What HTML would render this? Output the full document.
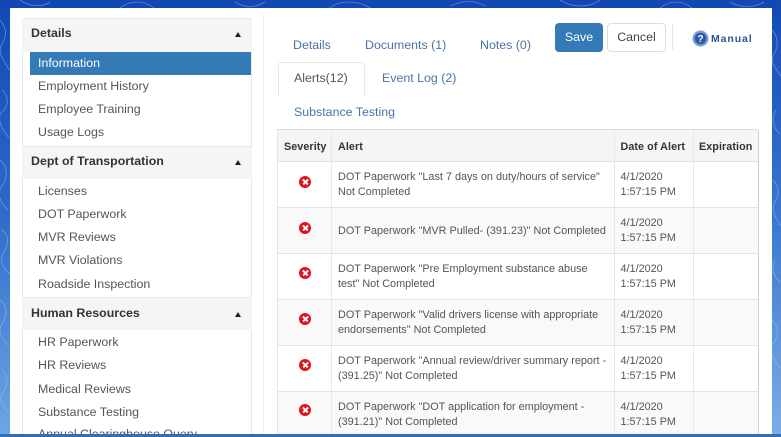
<!DOCTYPE html>
<html><head><meta charset="utf-8"><style>
html,body{margin:0;padding:0}
body{width:781px;height:437px;overflow:hidden;position:relative;font-family:"Liberation Sans",sans-serif;background:#fff}
.a{position:absolute;white-space:nowrap}
.m{font-size:12.4px;color:#555;left:38px;line-height:16px}
.h{font-size:12.4px;font-weight:bold;color:#333;left:31px;line-height:16px}
.tr{position:absolute;left:235px;width:0;height:0;border-left:3px solid transparent;border-right:3px solid transparent;border-bottom:5px solid #222}
.ph{position:absolute;left:22px;width:230px;background:#f5f5f5;border-top:1px solid #e9e9e9;box-sizing:border-box}
.t{font-size:12.4px;color:#4a74a8;line-height:16px}
.c{font-size:10.85px;color:#555;line-height:15.5px}
.b{font-size:10.75px;letter-spacing:.08px;font-weight:bold;color:#333;line-height:14px}
.l{position:absolute;background:#e8e8e8}
.r{position:absolute;left:277px;width:481px;height:46px;border-top:1px solid #e4e4e4;box-sizing:border-box}
.ic{position:absolute;left:299px;width:12px;height:12px;border-radius:50%;background:#e0141c}
.ic:before,.ic:after{content:"";position:absolute;left:2.5px;top:5.25px;width:7px;height:1.5px;background:#fff}
.ic:before{transform:rotate(45deg)}.ic:after{transform:rotate(-45deg)}
</style></head><body>
<svg class="a" style="left:0;top:0" width="781" height="437">
<defs><linearGradient id="g" x1="0" y1="0" x2="0" y2="1"><stop offset="0" stop-color="#1148b4"/><stop offset=".45" stop-color="#2a68c8"/><stop offset="1" stop-color="#6ea6e4"/></linearGradient>
<linearGradient id="g2" x1="0" y1="0" x2="0" y2="1"><stop offset="0" stop-color="#1148b4"/><stop offset=".5" stop-color="#3a78d0"/><stop offset="1" stop-color="#7aaee6"/></linearGradient></defs>
<rect width="781" height="437" fill="url(#g)"/>
<rect x="0" y="0" width="781" height="8" fill="#1148b4"/>
<rect x="772" width="9" height="437" fill="url(#g2)"/>
<g fill="none" stroke="#a9c8f0" stroke-opacity=".5" stroke-width=".8">
<path d="M0 20c6 8 8 14 2 24s4 18 7 26M2 90c7 6 7 16 0 22s2 20 7 26M0 160c8 6 8 18 2 26s-1 18 6 24M2 230c7 5 7 14 2 22s-2 16 6 22M0 300c8 6 7 16 2 24s0 16 7 22M2 370c6 6 7 14 1 22s2 16 6 22"/>
<path d="M772 30c6 6 7 16 2 24s2 14 7 22M776 110c-5 8-3 18 4 24M773 180c6 6 7 14 2 22s1 16 6 24M775 260c-4 8-2 16 5 22M772 320c7 6 7 16 1 24s2 16 7 24"/>
<path d="M20 0c8 6 22 8 30 2M120 8c10-8 24-8 34 0M235 2c10 6 20 6 30 0M330 8c10-8 28-8 40 0M450 6c14-6 24-6 36 0M560 0c12 8 30 8 40 0M660 8c10-8 22-8 32 0M730 2c10 6 24 6 34 0"/>
</g>
</svg>
<div class="a" style="left:10px;top:8px;width:762px;height:426px;background:#fff"></div>

<!-- sidebar -->
<div class="a" style="left:22px;top:18px;width:230px;height:419px;border:1px solid #e8e8e8;border-bottom:0;border-radius:3px 3px 0 0;box-sizing:border-box"></div>
<div class="ph" style="top:18px;height:34px;border-radius:3px 3px 0 0"></div>
<div class="ph" style="top:146px;height:33px"></div>
<div class="ph" style="top:297px;height:33px"></div>
<div class="a" style="left:30px;top:52px;width:221px;height:23px;background:#337ab7"></div>
<div class="a h" style="top:25px">Details</div>
<div class="a h" style="top:153px">Dept of Transportation</div>
<div class="a h" style="top:305px">Human Resources</div>
<div class="tr" style="top:32px"></div><div class="tr" style="top:160px"></div><div class="tr" style="top:312px"></div>
<div class="a m" style="top:55px;color:#fff">Information</div>
<div class="a m" style="top:78px">Employment History</div>
<div class="a m" style="top:101px">Employee Training</div>
<div class="a m" style="top:124px">Usage Logs</div>
<div class="a m" style="top:183px">Licenses</div>
<div class="a m" style="top:206px">DOT Paperwork</div>
<div class="a m" style="top:229px">MVR Reviews</div>
<div class="a m" style="top:252px">MVR Violations</div>
<div class="a m" style="top:276px">Roadside Inspection</div>
<div class="a m" style="top:334px">HR Paperwork</div>
<div class="a m" style="top:357px">HR Reviews</div>
<div class="a m" style="top:381px">Medical Reviews</div>
<div class="a m" style="top:404px">Substance Testing</div>
<div class="a" style="left:22px;top:426px;width:229px;height:8px;overflow:hidden"><div class="a m" style="left:16px;top:0">Annual Clearinghouse Query</div></div>

<div class="l" style="left:263px;top:14px;width:1px;height:420px;background:#efefef"></div>

<!-- tabs -->
<div class="a t" style="left:293px;top:37px">Details</div>
<div class="a t" style="left:365px;top:37px">Documents (1)</div>
<div class="a t" style="left:480px;top:37px">Notes (0)</div>
<div class="a" style="left:278px;top:62px;width:87px;height:34px;border:1px solid #e9e9e9;border-bottom:0;border-radius:3px 3px 0 0;box-sizing:border-box"></div>
<div class="a t" style="left:294px;top:70px;color:#555">Alerts(12)</div>
<div class="a t" style="left:382px;top:70px">Event Log (2)</div>
<div class="a t" style="left:294px;top:104px">Substance Testing</div>

<!-- buttons -->
<div class="a" style="left:555px;top:23px;width:48px;height:29px;background:#337ab7;border-radius:4px;color:#fff;font-size:12.4px;line-height:29px;text-align:center">Save</div>
<div class="a" style="left:607px;top:23px;width:59px;height:29px;background:#fff;border:1px solid #ddd;border-radius:4px;box-sizing:border-box;color:#444;font-size:12.4px;line-height:27px;text-align:center">Cancel</div>
<div class="l" style="left:672px;top:24px;width:1px;height:26px;background:#e6e6e6"></div>
<svg class="a" style="left:692px;top:30px" width="18" height="18"><circle cx="8.5" cy="8.5" r="8" fill="#7f9fd2"/><circle cx="8.5" cy="8.5" r="5.8" fill="#2a5ba6"/><text x="8.5" y="12" font-size="10" font-weight="bold" fill="#fff" text-anchor="middle" font-family="Liberation Sans">?</text></svg>
<div class="a" style="left:711px;top:32px;font-size:10.5px;font-weight:bold;color:#2c5494;letter-spacing:.9px;line-height:15px">Manual</div>

<!-- table -->
<div class="a" style="left:277px;top:130px;width:481px;height:31px;background:#f5f5f5"></div>
<div class="a" style="left:277px;top:207px;width:481px;height:46px;background:#f9f9f9"></div>
<div class="a" style="left:277px;top:299px;width:481px;height:46px;background:#f9f9f9"></div>
<div class="a" style="left:277px;top:391px;width:481px;height:46px;background:#f9f9f9"></div>
<div class="l" style="left:277px;top:129px;width:481px;height:1px;background:#dcdcdc"></div>
<div class="r" style="top:161px"></div><div class="r" style="top:207px"></div><div class="r" style="top:253px"></div><div class="r" style="top:299px"></div><div class="r" style="top:345px"></div><div class="r" style="top:391px"></div>
<div class="l" style="left:277px;top:130px;width:1px;height:307px;background:#e4e4e4"></div>
<div class="l" style="left:331px;top:130px;width:1px;height:307px"></div>
<div class="l" style="left:614px;top:130px;width:1px;height:307px"></div>
<div class="l" style="left:693px;top:130px;width:1px;height:307px"></div>
<div class="l" style="left:758px;top:130px;width:1px;height:307px;background:#cfcfcf"></div>

<div class="a b" style="left:284px;top:140px">Severity</div>
<div class="a b" style="left:338px;top:140px">Alert</div>
<div class="a b" style="left:620.5px;top:140px">Date of Alert</div>
<div class="a b" style="left:699px;top:140px">Expiration</div>

<div class="ic" style="top:176px"></div>
<div class="a c" style="left:338px;top:169.5px">DOT Paperwork "Last 7 days on duty/hours of service"<br>Not Completed</div>
<div class="a c" style="left:620.5px;top:169.5px">4/1/2020<br>1:57:15 PM</div>
<div class="ic" style="top:222px"></div>
<div class="a c" style="left:338px;top:224px">DOT Paperwork "MVR Pulled- (391.23)" Not Completed</div>
<div class="a c" style="left:620.5px;top:215.5px">4/1/2020<br>1:57:15 PM</div>
<div class="ic" style="top:267px"></div>
<div class="a c" style="left:338px;top:261.5px">DOT Paperwork "Pre Employment substance abuse<br>test" Not Completed</div>
<div class="a c" style="left:620.5px;top:261.5px">4/1/2020<br>1:57:15 PM</div>
<div class="ic" style="top:313px"></div>
<div class="a c" style="left:338px;top:307.5px">DOT Paperwork "Valid drivers license with appropriate<br>endorsements" Not Completed</div>
<div class="a c" style="left:620.5px;top:307.5px">4/1/2020<br>1:57:15 PM</div>
<div class="ic" style="top:359px"></div>
<div class="a c" style="left:338px;top:353.5px">DOT Paperwork "Annual review/driver summary report -<br>(391.25)" Not Completed</div>
<div class="a c" style="left:620.5px;top:353.5px">4/1/2020<br>1:57:15 PM</div>
<div class="ic" style="top:404px"></div>
<div class="a c" style="left:338px;top:399.5px">DOT Paperwork "DOT application for employment -<br>(391.21)" Not Completed</div>
<div class="a c" style="left:620.5px;top:399.5px">4/1/2020<br>1:57:15 PM</div>

<div class="a" style="left:0;top:434px;width:781px;height:3px;background:#2f6fb4"></div>
</body></html>
